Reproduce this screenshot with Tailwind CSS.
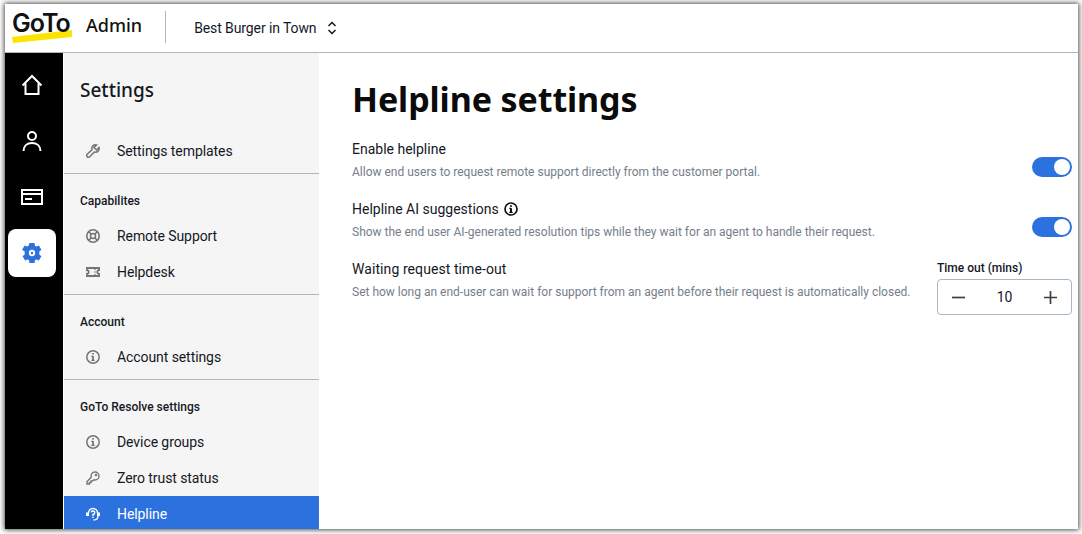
<!DOCTYPE html>
<html lang="en">
<head>
    <meta charset="UTF-8">
    <title>Helpline settings</title>
    <script src="https://cdn.jsdelivr.net/npm/@tailwindcss/browser@4"></script>
</head>
<body class="bg-white w-[1082px] h-[534px] overflow-hidden font-['Roboto',sans-serif] text-[#14181f]">
    <div class="ml-[5px] mt-[4px] w-[1073px] h-[525px] flex flex-col bg-white overflow-hidden shadow-[0_0_5px_1px_rgba(0,0,0,0.7)]">
        <!-- Top bar -->
        <header class="h-[49px] shrink-0 flex items-center border-b border-[#a9b8c6]">
            <div class="w-[60px] ml-[7px] relative h-[40px] shrink-0">
                <svg class="absolute left-0 top-[22px]" width="60" height="14" viewBox="0 0 60 14"><polygon points="0,7 60,0 60,7 1,13" fill="#fde400"/></svg>
                <span class="absolute left-0 top-0 text-[25px] leading-[30px] tracking-[-1px] font-semibold text-[#111] font-['Inter',sans-serif]">GoTo</span>
            </div>
            <span class="ml-[14px] text-[18px] leading-[24px] font-medium text-[#111] font-['Noto_Sans',sans-serif] -mt-[7px]">Admin</span>
            <div class="ml-[23px] h-[32px] w-px bg-[#a9b8c6] -mt-[3px]"></div>
            <span class="ml-[28px] text-[14px] leading-[20px] tracking-[-.1px] text-[#14181f]">Best Burger in Town</span>
            <svg class="ml-[9px]" width="12" height="16" viewBox="0 0 12 16" fill="none" stroke="#14181f" stroke-width="1.5"><path d="M2.5 6 6 2.5 9.5 6M2.5 10 6 13.500 9.500 10"/></svg>
        </header>

        <div class="flex flex-1 min-h-0">
            <!-- Icon rail -->
            <nav class="w-[58px] bg-black shrink-0 flex flex-col items-center pr-[4px] pt-[13px] text-white">
                <div class="h-[38px] flex items-center justify-center">
                    <svg width="22" height="22" viewBox="0 0 22 22" fill="none" stroke="#fff" stroke-width="2"><path d="M1.500 11.500 11 2l9.500 9.500M4.500 9.500V20h13V9.500"/></svg>
                </div>
                <div class="h-[38px] mt-[18px] flex items-center justify-center">
                    <svg width="20" height="22" viewBox="0 0 20 22" fill="none" stroke="#fff" stroke-width="2"><circle cx="10" cy="6" r="4"/><path d="M1.500 21c0-5 3.500-8 8.500-8s8.500 3 8.500 8"/></svg>
                </div>
                <div class="h-[38px] mt-[18px] flex items-center justify-center">
                    <svg width="22" height="18" viewBox="0 0 22 18"><rect x="1" y="2" width="20" height="14" fill="none" stroke="#fff" stroke-width="2"/><rect x="1" y="5" width="20" height="2" fill="#fff"/><rect x="4" y="10" width="7" height="2" fill="#fff"/></svg>
                </div>
                <div class="w-[48px] h-[48px] mt-[13px] bg-white rounded-[8px] flex items-center justify-center">
                    <svg width="20" height="20" viewBox="0 0 20 20"><path fill="#2c72de" d="M7.500 0h5l.5 2.700 1.300.8 2.600-1 2.500 4.300-2.100 1.800v2.800l2.100 1.800-2.500 4.300-2.600-1-1.300.8-.5 2.700h-5l-.5-2.700-1.300-.8-2.600 1-2.500-4.300 2.100-1.800V8.600L.1 6.800l2.500-4.300 2.600 1 1.300-.8z"/><circle cx="10" cy="10" r="3.200" fill="#fff"/><circle cx="10" cy="10" r="1.200" fill="#2c72de"/></svg>
                </div>
            </nav>

            <!-- Settings nav -->
            <aside class="w-[255px] ml-px bg-[#f5f5f5] shrink-0 text-[14px] tracking-[-.08px] overflow-hidden">
                <h2 class="pl-[16px] pt-[24px] text-[19px] leading-[26px] font-medium text-[#14181f] font-['Noto_Sans',sans-serif] tracking-normal">Settings</h2>
                <div class="mt-[30px] h-[36px] flex items-center pl-[22px] gap-[17px]">
                    <svg width="14" height="14" viewBox="0 0 14 14" fill="none" stroke="#757575" stroke-width="1.500"><path d="M13 3.500 10.500 6 8 3.500 10.500 1a3.500 3.500 0 0 0-4.400 4.500L1 10.500a1.800 1.800 0 0 0 2.500 2.500l5-5.100A3.500 3.500 0 0 0 13 3.500z"/></svg>
                    <span class="leading-[20px]">Settings templates</span>
                </div>
                <div class="mt-[4px] border-t border-[#a9b8c6] pt-[18px]">
                    <p class="pl-[16px] text-[12px] leading-[18px] font-medium tracking-normal">Capabilites</p>
                    <div class="mt-[8px] h-[36px] flex items-center pl-[22px] gap-[17px]">
                        <svg width="14" height="14" viewBox="0 0 14 14" fill="none" stroke="#757575"><circle cx="7" cy="7" r="6.200" stroke-width="1.600"/><circle cx="7" cy="7" r="2.500" stroke-width="1.600"/><path stroke-width="1.600" d="m2.800 2.800 2.500 2.500M11.200 2.800 8.700 5.300M2.800 11.200l2.500-2.500M11.200 11.200 8.700 8.700"/></svg>
                        <span class="leading-[20px]">Remote Support</span>
                    </div>
                    <div class="h-[36px] flex items-center pl-[22px] gap-[17px]">
                        <svg width="14" height="14" viewBox="0 0 14 14" fill="none" stroke="#757575" stroke-width="1.800"><path d="M.9 3h12.200v2.200a1.800 1.800 0 0 0 0 3.600V11H.900V8.800a1.800 1.800 0 0 0 0-3.600z"/><path stroke-width="1.200" d="M9 3.500v1.500M9 6.300v1.400M9 9v1.500"/></svg>
                        <span class="leading-[20px]">Helpdesk</span>
                    </div>
                </div>
                <div class="mt-[4px] border-t border-[#a9b8c6] pt-[18px]">
                    <p class="pl-[16px] text-[12px] leading-[18px] font-medium tracking-normal">Account</p>
                    <div class="mt-[8px] h-[36px] flex items-center pl-[22px] gap-[17px]">
                        <svg width="14" height="14" viewBox="0 0 14 14" fill="none" stroke="#757575" stroke-width="1.500"><circle cx="7" cy="7" r="6.200"/><path stroke-width="1.800" d="M7 6v4.500M7 3v1.600"/><path stroke-width="1.200" d="M5.300 6.300H7M5.300 10.400h3.400"/></svg>
                        <span class="leading-[20px]">Account settings</span>
                    </div>
                </div>
                <div class="mt-[4px] border-t border-[#a9b8c6] pt-[18px]">
                    <p class="pl-[16px] text-[12px] leading-[18px] font-medium tracking-normal">GoTo Resolve settings</p>
                    <div class="mt-[8px] h-[36px] flex items-center pl-[22px] gap-[17px]">
                        <svg width="14" height="14" viewBox="0 0 14 14" fill="none" stroke="#757575" stroke-width="1.500"><circle cx="7" cy="7" r="6.200"/><path stroke-width="1.800" d="M7 6v4.500M7 3v1.600"/><path stroke-width="1.200" d="M5.300 6.300H7M5.300 10.400h3.400"/></svg>
                        <span class="leading-[20px]">Device groups</span>
                    </div>
                    <div class="h-[36px] flex items-center pl-[22px] gap-[17px]">
                        <svg width="14" height="14" viewBox="0 0 14 14" fill="none" stroke="#757575" stroke-width="1.400"><path d="M9 1a4 4 0 0 1 0 8 4 4 0 0 1-1.200-.2L6.500 10H5v1.500H3.500V13H1v-2.500l4.200-4.300A4 4 0 0 1 9 1z"/><circle cx="10" cy="4" r=".6"/></svg>
                        <span class="leading-[20px]">Zero trust status</span>
                    </div>
                    <div class="h-[36px] flex items-center pl-[22px] gap-[17px] bg-[#2c72de] text-white">
                        <svg width="14" height="14" viewBox="0 0 14 14" fill="none" stroke="#fff" stroke-width="1.500"><path d="M2.500 6a4.500 4.500 0 0 1 9 0"/><path stroke-width="3" d="M1.500 5.500v3.500M12.500 5.500v3.500"/><path stroke-width="1.300" d="M12 9c0 2.800-2 4-4.500 4"/><path stroke-width="1.500" d="M5.200 5.200A1.800 1.800 0 1 1 7 7.500V9"/><path stroke-width="1.500" d="M7 9.800v1.200"/></svg>
                        <span class="leading-[20px]">Helpline</span>
                    </div>
                </div>
            </aside>

            <!-- Main content -->
            <main class="flex-1 pl-[33px] pr-[6px] pt-[24px] min-w-0">
                <h1 class="text-[34px] leading-[44px] font-bold text-[#0b0b0b] font-['Noto_Sans',sans-serif] tracking-[-.1px]">Helpline settings</h1>
                <div class="mt-[18px] flex justify-between">
                    <div>
                        <p class="text-[14px] leading-[20px]">Enable helpline</p>
                        <p class="mt-[5px] text-[12px] leading-[16px] text-[#757e89]">Allow end users to request remote support directly from the customer portal.</p>
                    </div>
                    <div class="mt-[18px] w-[40px] h-[20px] rounded-full bg-[#2c72de] p-[2px] flex justify-end">
                        <div class="w-[16px] h-[16px] rounded-full bg-white"></div>
                    </div>
                </div>
                <div class="mt-[19px] flex justify-between">
                    <div>
                        <p class="text-[14px] leading-[20px] flex items-center gap-[5px]">Helpline AI suggestions
                            <svg width="14" height="14" viewBox="0 0 14 14" fill="none" stroke="#111" stroke-width="1.700"><circle cx="7" cy="7" r="6"/><path stroke-width="2" d="M7 6.200v4M7 3.200v1.600"/><path stroke-width="1.300" d="M5.300 6.400H7M5.300 10.400h3.400"/></svg>
                        </p>
                        <p class="mt-[5px] text-[12px] leading-[16px] text-[#757e89]">Show the end user AI-generated resolution tips while they wait for an agent to handle their request.</p>
                    </div>
                    <div class="mt-[18px] w-[40px] h-[20px] rounded-full bg-[#2c72de] p-[2px] flex justify-end">
                        <div class="w-[16px] h-[16px] rounded-full bg-white"></div>
                    </div>
                </div>
                <div class="mt-[19px] flex justify-between">
                    <div>
                        <p class="text-[14px] leading-[20px] tracking-[.08px]">Waiting request time-out</p>
                        <p class="mt-[5px] text-[12px] leading-[16px] text-[#757e89]">Set how long an end-user can wait for support from an agent before their request is automatically closed.</p>
                    </div>
                    <div class="w-[135px]">
                        <p class="text-[12px] leading-[16px] font-medium mt-[1px]">Time out (mins)</p>
                        <div class="mt-[3px] h-[36px] border border-[#a9b8c6] rounded-[4px] flex items-center justify-between px-[14px]">
                            <svg width="13" height="13" viewBox="0 0 13 13" stroke="#3a3f46" stroke-width="1.700"><path d="M0 6.500h13"/></svg>
                            <span class="text-[14px] leading-[20px]">10</span>
                            <svg width="13" height="13" viewBox="0 0 13 13" stroke="#3a3f46" stroke-width="1.700"><path d="M0 6.500h13M6.500 0v13"/></svg>
                        </div>
                    </div>
                </div>
            </main>
        </div>
    </div>
</body>
</html>
